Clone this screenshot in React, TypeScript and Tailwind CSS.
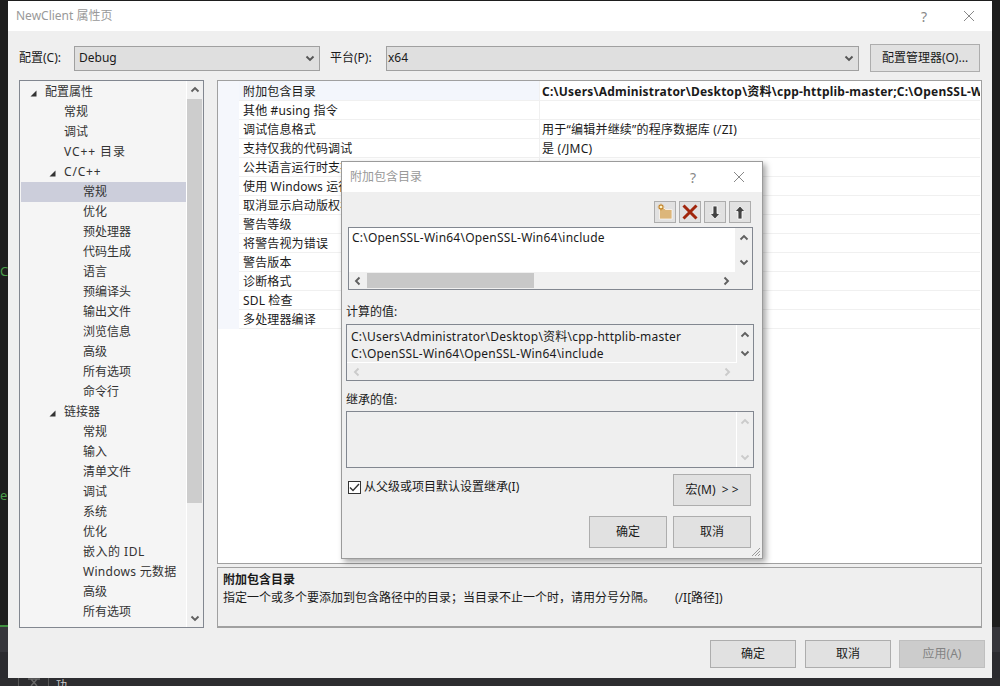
import React from "react";

const FONT = "[font-family:'Noto_Sans','Noto_Sans_CJK_SC',sans-serif]";

function Chev({ dir, color = "#606060", className = "" }: { dir: "up" | "down" | "left" | "right"; color?: string; className?: string }) {
  const d = {
    up: "M1.5 6.5 L5 3 L8.5 6.5",
    down: "M1.5 3.5 L5 7 L8.5 3.5",
    left: "M6.5 1.5 L3 5 L6.5 8.5",
    right: "M3.5 1.5 L7 5 L3.5 8.5",
  }[dir];
  return (
    <svg width="10" height="10" viewBox="0 0 10 10" className={className}>
      <path d={d} fill="none" stroke={color} strokeWidth="1.9" />
    </svg>
  );
}

function WinBtn({ children, className = "" }: { children: React.ReactNode; className?: string }) {
  return (
    <div className={`flex items-center justify-center border border-[#adadad] bg-[#e1e1e1] text-[12px] text-[#1a1a1a] ${className}`}>{children}</div>
  );
}

function Tri() {
  return (
    <svg width="7" height="7" viewBox="0 0 7 7" className="absolute top-[7px] -left-[15px]">
      <path d="M6.5 0.5 V6.5 H0.5 Z" fill="#333" />
    </svg>
  );
}

const tree: [string, number, boolean?, boolean?, string?][] = [
  ["配置属性", 45, true],
  ["常规", 64],
  ["调试", 64],
  ["VC++ 目录", 64, false, false, "tracking-[0.9px]"],
  ["C/C++", 64, true, false, "tracking-[0.8px]"],
  ["常规", 83, false, true],
  ["优化", 83],
  ["预处理器", 83],
  ["代码生成", 83],
  ["语言", 83],
  ["预编译头", 83],
  ["输出文件", 83],
  ["浏览信息", 83],
  ["高级", 83],
  ["所有选项", 83],
  ["命令行", 83],
  ["链接器", 64, true],
  ["常规", 83],
  ["输入", 83],
  ["清单文件", 83],
  ["调试", 83],
  ["系统", 83],
  ["优化", 83],
  ["嵌入的 IDL", 83, false, false, "tracking-[0.5px]"],
  ["Windows 元数据", 83, false, false, "tracking-[0.3px]"],
  ["高级", 83],
  ["所有选项", 83],
];

const props: [string, string, boolean?][] = [
  ["附加包含目录", "C:\\Users\\Administrator\\Desktop\\资料\\cpp-httplib-master;C:\\OpenSSL-Win64\\OpenSSL-Win64\\include;%(AdditionalIncludeDirectories)", true],
  ["其他 #using 指令", ""],
  ["调试信息格式", "用于“编辑并继续”的程序数据库 (/ZI)"],
  ["支持仅我的代码调试", "是 (/JMC)"],
  ["公共语言运行时支持", ""],
  ["使用 Windows 运行库", ""],
  ["取消显示启动版权标志", ""],
  ["警告等级", ""],
  ["将警告视为错误", ""],
  ["警告版本", ""],
  ["诊断格式", ""],
  ["SDL 检查", ""],
  ["多处理器编译", ""],
];

function Tree() {
  return (
    <div className="relative flex h-[548px] w-[185px] shrink-0 border border-[#828790] bg-[#f5f5f5]">
      <div className="flex min-w-0 flex-1 flex-col overflow-hidden border-r border-white pt-[1px] pl-[1px]">
        {tree.map(([t, x, open, sel, track], i) => (
          <div key={i} className={`flex h-[20px] shrink-0 items-center text-[#333] ${sel ? "bg-[#cccedb]" : ""}`}>
            <span className={`relative whitespace-pre ${track ?? ""}`} style={{ marginLeft: x - 21 }}>
              {open && <Tri />}
              {t}
            </span>
          </div>
        ))}
      </div>
      <div className="flex w-[16px] shrink-0 flex-col bg-[#f0f0f0]">
        <div className="flex h-[18px] items-center justify-center"><Chev dir="up" /></div>
        <div className="h-[404px] w-[15px] bg-[#cdcdcd]" />
        <div className="flex-1" />
        <div className="flex h-[18px] items-center justify-center"><Chev dir="down" /></div>
      </div>
    </div>
  );
}

function Grid() {
  return (
    <div className="flex h-[484px] flex-col overflow-hidden border border-[#a0a0a0] bg-white pr-[1px]">
      {props.map(([k, v, bold], i) => (
        <div key={i} className={`flex shrink-0 ${i === 0 ? "h-[20px]" : "h-[19px]"}`}>
          <div className="w-[21px] shrink-0 bg-[#f5f7fc]" />
          <div className={`flex w-[300px] shrink-0 items-center border-b border-[#f0f0f0] pt-[2px] pl-[4px] tracking-[0.15px] whitespace-pre text-[#1a1a1a] ${i === 0 ? "bg-[#f3f6fc]" : ""}`}>{k}</div>
          <div className={`flex min-w-0 flex-1 items-center overflow-hidden border-b border-l border-[#f0f0f0] pt-[2px] pl-[2px] tracking-[0.22px] whitespace-pre text-[#1a1a1a] ${bold ? "font-bold" : ""}`}>{v}</div>
        </div>
      ))}
    </div>
  );
}

function ListScroll({ disabled = false, h = 56 }: { disabled?: boolean; h?: number }) {
  const c = disabled ? "#cbcbcb" : "#606060";
  return (
    <div className="flex w-[17px] shrink-0 flex-col items-center justify-between border-l border-white py-[5px]" style={{ height: h }}>
      <Chev dir="up" color={c} />
      <Chev dir="down" color={c} />
    </div>
  );
}

function FolderIcon() {
  return (
    <svg width="18" height="18" viewBox="0 0 18 18">
      <path d="M3.5 5 H8 L9.5 6.5 H16 V16 H3.5 Z" fill="#dcb67a" stroke="#fff" strokeWidth="0.7" />
      <path d="M5 0.8 V7.2 M1.8 4 H8.2 M2.8 1.8 L7.2 6.2 M7.2 1.8 L2.8 6.2" stroke="#c27d1a" strokeWidth="1.1" />
      <circle cx="5" cy="4" r="1.3" fill="#fff3c4" />
    </svg>
  );
}

function DeleteIcon() {
  return (
    <svg width="16" height="16" viewBox="0 0 16 16">
      <path d="M1.5 1.5 L14.5 14.5 M14.5 1.5 L1.5 14.5" stroke="#a1260d" strokeWidth="3" />
    </svg>
  );
}

function ArrowIcon({ up = false }: { up?: boolean }) {
  const d = up
    ? "M7 1 L12 6.5 H9 V14 H5 V6.5 H2 Z"
    : "M7 14 L12 8.5 H9 V1 H5 V8.5 H2 Z";
  return (
    <svg width="14" height="15" viewBox="0 0 14 15">
      <path d={d} fill="#424242" stroke="#fff" strokeWidth="0.8" />
    </svg>
  );
}

function Dialog() {
  return (
    <div className={`absolute top-[161px] left-[341px] flex h-[398px] w-[422px] flex-col border border-[#9b9b9b] bg-[#efefef] text-[12px] shadow-[3px_3px_6px_rgba(0,0,0,0.35)] ${FONT}`}>
      <div className="flex h-[30px] shrink-0 items-center bg-white pl-[8px] text-[#999]">
        <span className="flex-1">附加包含目录</span>
        <span className="mr-[37px] text-[14px] text-[#888]">?</span>
        <svg width="12" height="12" viewBox="0 0 12 12" className="mr-[17px]">
          <path d="M1 1 L11 11 M11 1 L1 11" stroke="#888" strokeWidth="1" />
        </svg>
      </div>
      <div className="mt-[9px] mr-[11px] flex h-[22px] shrink-0 justify-end gap-[3px]">
        <WinBtn className="w-[22px]"><FolderIcon /></WinBtn>
        <WinBtn className="w-[22px]"><DeleteIcon /></WinBtn>
        <WinBtn className="w-[22px]"><ArrowIcon /></WinBtn>
        <WinBtn className="w-[22px]"><ArrowIcon up /></WinBtn>
      </div>
      <div className="mt-[4px] ml-[6px] flex h-[63px] w-[405px] shrink-0 flex-col border border-[#828790] bg-[#f0f0f0]">
        <div className="flex h-[44px] shrink-0">
          <div className="flex-1 bg-white pt-[1px] pl-[3px] leading-[18px] tracking-[0.22px] text-[#1a1a1a]">C:\OpenSSL-Win64\OpenSSL-Win64\include</div>
          <div className="flex w-[17px] shrink-0 flex-col items-center justify-between py-[5px]">
            <Chev dir="up" />
            <Chev dir="down" />
          </div>
        </div>
        <div className="flex flex-1 items-center">
          <Chev dir="left" className="ml-[4px]" />
          <div className="ml-[4px] h-[15px] w-[167px] bg-[#c8c8c8]" />
          <div className="flex-1" />
          <Chev dir="right" className="mr-[21px]" />
        </div>
      </div>
      <div className="mt-[13px] ml-[4px] h-[18px] shrink-0 leading-[18px] text-[#1a1a1a]">计算的值:</div>
      <div className="mt-[3px] ml-[4px] flex h-[57px] w-[408px] shrink-0 flex-col border border-[#828790]">
        <div className="flex h-[38px] shrink-0">
          <div className="flex-1 border-b border-white pt-[3px] pl-[4px] leading-[17px] tracking-[0.22px] text-[#1a1a1a]">
            <div>C:\Users\Administrator\Desktop\资料\cpp-httplib-master</div>
            <div>C:\OpenSSL-Win64\OpenSSL-Win64\include</div>
          </div>
          <ListScroll h={38} />
        </div>
        <div className="flex flex-1 items-center justify-between pr-[21px] pl-[5px]">
          <Chev dir="left" color="#cbcbcb" />
          <Chev dir="right" color="#cbcbcb" />
        </div>
      </div>
      <div className="mt-[10px] ml-[4px] h-[18px] shrink-0 leading-[18px] text-[#1a1a1a]">继承的值:</div>
      <div className="mt-[2px] ml-[4px] flex h-[57px] w-[408px] shrink-0 justify-end border border-[#828790]">
        <ListScroll disabled h={55} />
      </div>
      <div className="relative mt-[6px] mr-[11px] ml-[6px] flex h-[32px] shrink-0 items-start justify-between">
        <div className="mt-[4px] flex items-center gap-[3px] text-[#1a1a1a]">
          <div className="flex h-[13px] w-[13px] items-center justify-center border border-[#333] bg-white">
            <svg width="11" height="11" viewBox="0 0 11 11"><path d="M1 5.5 L4 8.5 L10 2" fill="none" stroke="#333" strokeWidth="1.4" /></svg>
          </div>
          <span>从父级或项目默认设置继承(I)</span>
        </div>
        <WinBtn className="h-[32px] w-[78px]">宏(M)&nbsp;&nbsp;&gt; &gt;</WinBtn>
      </div>
      <div className="mt-[10px] mr-[11px] flex justify-end gap-[6px]">
        <WinBtn className="h-[32px] w-[78px]">确定</WinBtn>
        <WinBtn className="h-[32px] w-[78px]">取消</WinBtn>
      </div>
      <svg width="10" height="10" viewBox="0 0 10 10" className="absolute right-[1px] bottom-[1px]">
        <path d="M9 1 L1 9 M9 4 L4 9 M9 7 L7 9" stroke="#9a9a9a" strokeWidth="1" />
      </svg>
    </div>
  );
}

function MainWindow() {
  return (
    <div className={`absolute top-[1px] left-[8px] flex h-[677px] w-[984px] flex-col bg-[#efefef] text-[12px] ${FONT}`}>
      <div className="flex h-[30px] shrink-0 items-center bg-white pl-[8px] text-[#999]">
        <span className="flex-1">NewClient 属性页</span>
        <span className="mr-[36px] text-[14px] text-[#888]">?</span>
        <svg width="12" height="12" viewBox="0 0 12 12" className="mr-[17px]">
          <path d="M1 1 L11 11 M11 1 L1 11" stroke="#888" strokeWidth="1" />
        </svg>
      </div>
      <div className="mt-[13px] flex h-[28px] shrink-0 items-center pl-[11px] text-[#1a1a1a]">
        <span className="w-[55px]">配置(C):</span>
        <div className="flex h-[25px] w-[246px] items-center justify-between border border-[#a0a0a0] bg-[#dfdfdf] pr-[4px] pl-[4px]">
          <span>Debug</span>
          <Chev dir="down" color="#555" />
        </div>
        <span className="ml-[10px] w-[56px]">平台(P):</span>
        <div className="flex h-[25px] w-[473px] items-center justify-between border border-[#a0a0a0] bg-[#dfdfdf] pr-[4px] pl-[1px]">
          <span>x64</span>
          <Chev dir="down" color="#555" />
        </div>
        <WinBtn className="ml-[11px] h-[28px] w-[110px]">配置管理器(O)...</WinBtn>
      </div>
      <div className="mt-[8px] flex shrink-0 gap-[13px] pl-[11px]">
        <Tree />
        <div className="flex w-[765px] flex-col gap-[3px]">
          <Grid />
          <div className="h-[61px] border border-b-2 border-[#a0a0a0] pt-[3px] pl-[5px] leading-[18px] text-[#1a1a1a]">
            <div className="font-bold">附加包含目录</div>
            <div className="flex whitespace-pre">
              <span>指定一个或多个要添加到包含路径中的目录；当目录不止一个时，请用分号分隔。</span>
              <span className="ml-[20px]">(/I[路径])</span>
            </div>
          </div>
        </div>
      </div>
      <div className="mt-[12px] flex shrink-0 justify-end gap-[8px] pr-[7px]">
        <WinBtn className="mr-[1px] h-[28px] w-[86px]">确定</WinBtn>
        <WinBtn className="h-[28px] w-[86px]">取消</WinBtn>
        <div className="flex h-[28px] w-[86px] items-center justify-center border border-[#bfbfbf] bg-[#cccccc] text-[#838383]">应用(A)</div>
      </div>
    </div>
  );
}

export default function App() {
  return (
    <div className={`relative h-[686px] w-[1000px] overflow-hidden bg-[#1e1e1e] ${FONT}`}>
      <div className="absolute top-[263px] left-0 text-[13px] leading-[16px] text-[#4a9c4a]">C</div>
      <div className="absolute top-[487px] left-0 text-[13px] leading-[16px] text-[#4a9c4a]">e</div>
      <div className="absolute top-[625px] left-0 h-[2px] w-[8px] bg-[#3f8f3f]" />
      <div className="absolute top-[627px] left-0 h-[25px] w-[8px] bg-[#36363b]" />
      <div className="absolute top-[652px] left-0 h-[26px] w-[8px] bg-[#2b2b2f]" />
      <div className="absolute top-[627px] right-0 h-[25px] w-[8px] bg-[#36363b]" />
      <div className="absolute top-[652px] right-0 h-[26px] w-[8px] bg-[#2b2b2f]" />
      <div className="absolute bottom-0 left-0 flex h-[8px] w-full items-start bg-[#2d2d30] text-[11px] leading-[14px] text-[#ccc]">
        <div className="ml-[18px] h-full w-px bg-[#555]" />
        <svg width="14" height="8" viewBox="0 0 14 8" className="ml-[8px]"><path d="M1 1 L13 1 M4 1 L10 8 M10 1 L4 8" stroke="#666" strokeWidth="1.5" /></svg>
        <div className="ml-[7px] h-full w-px bg-[#555]" />
        <span className="ml-[7px]">功</span>
      </div>
      <MainWindow />
      <Dialog />
    </div>
  );
}
